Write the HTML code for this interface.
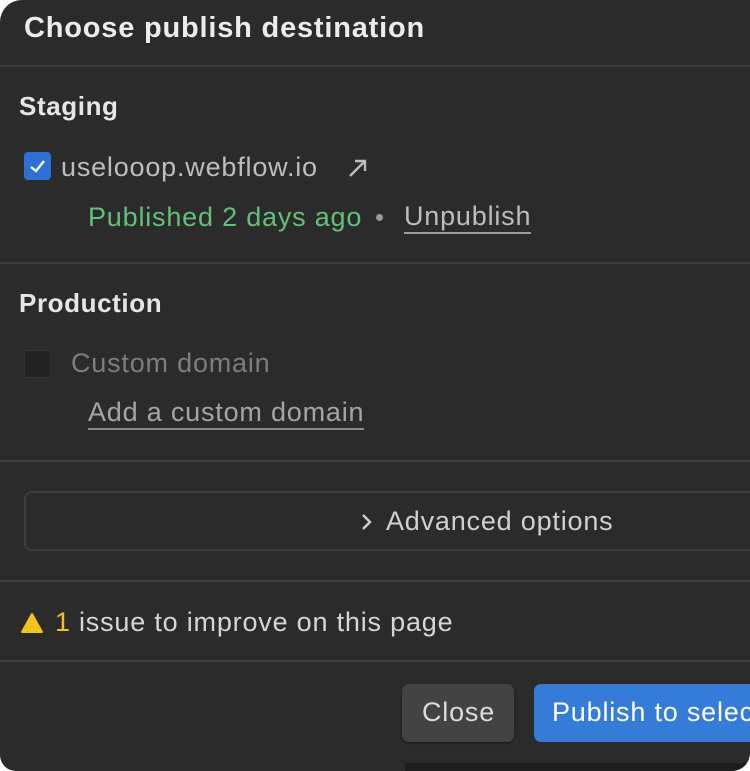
<!DOCTYPE html>
<html><head><style>
html,body{margin:0;padding:0;width:750px;height:771px;background:#fff;overflow:hidden;font-family:"Liberation Sans",Arial,sans-serif;}
.p{position:absolute;left:0;top:0;width:750px;height:771px;background:#2b2b2b;border-radius:22px 0 18px 16px;overflow:hidden;}
.hr{position:absolute;left:0;width:750px;height:2px;background:#3d3d3d;}
.t{position:absolute;white-space:nowrap;font-size:27px;letter-spacing:0.8px;line-height:32px;}
</style></head><body>
<div class="p">
<div class="t" style="left:24px;top:12px;font-size:29px;font-weight:bold;color:#ececec;">Choose publish destination</div>
<div class="hr" style="top:65px"></div>
<div class="t" style="left:19px;top:90px;font-size:26px;letter-spacing:0.6px;font-weight:bold;color:#e6e6e6;">Staging</div>
<div style="position:absolute;left:24px;top:152px;width:27px;height:28px;background:#2f6fd6;border-radius:4px;"></div>
<svg style="position:absolute;left:24px;top:152px" width="27" height="28"><path d="M7 15 L12 19 L20 9" stroke="#fff" stroke-width="2.4" fill="none"/></svg>
<div class="t" style="left:61px;top:151px;color:#bdbdbd;">uselooop.webflow.io</div>
<svg style="position:absolute;left:347px;top:157px" width="22" height="22"><path d="M3 19 L18 4 M8 4 H18 V14" stroke="#bdbdbd" stroke-width="2.4" fill="none"/></svg>
<div class="t" style="left:88px;top:201px;color:#62c07a;">Published 2 days ago</div>
<div style="position:absolute;left:376px;top:214px;width:7px;height:7px;border-radius:50%;background:#9a9a9a;"></div>
<div class="t" style="left:404px;top:200px;color:#bdbdbd;border-bottom:2px solid #9a9a9a;">Unpublish</div>
<div class="hr" style="top:262px"></div>
<div class="t" style="left:19px;top:287px;font-size:26px;letter-spacing:0.6px;font-weight:bold;color:#e6e6e6;">Production</div>
<div style="position:absolute;left:24px;top:350px;width:25px;height:26px;background:#222;border:1px solid #333;border-radius:4px;"></div>
<div class="t" style="left:71px;top:347px;color:#7d7d7d;">Custom domain</div>
<div class="t" style="left:88px;top:396px;color:#a5a5a5;border-bottom:2px solid #8a8a8a;">Add a custom domain</div>
<div class="hr" style="top:460px"></div>
<div style="position:absolute;left:24px;top:491px;width:760px;height:56px;border:2px solid #3e3e3e;border-radius:8px;"></div>
<svg style="position:absolute;left:360px;top:512px" width="14" height="20"><path d="M3 3 L10 10 L3 17" stroke="#d0d0d0" stroke-width="2.4" fill="none"/></svg>
<div class="t" style="left:386px;top:505px;color:#d0d0d0;">Advanced options</div>
<div class="hr" style="top:580px"></div>
<svg style="position:absolute;left:20px;top:612px" width="24" height="21"><path d="M12 2 L22 20 H2 Z" fill="#f4c21b" stroke="#f4c21b" stroke-width="2" stroke-linejoin="round"/></svg>
<div class="t" style="left:55px;top:606px;color:#f4c21b;">1</div>
<div class="t" style="left:79px;top:606px;color:#d6d6d6;">issue to improve on this page</div>
<div class="hr" style="top:660px"></div>
<div style="position:absolute;left:402px;top:684px;width:112px;height:58px;background:#434343;border-radius:7px;box-shadow:0 1px 2px #1a1a1a;"></div>
<div class="t" style="left:422px;top:696px;color:#dcdcdc;">Close</div>
<div style="position:absolute;left:534px;top:684px;width:260px;height:58px;background:#347cd7;border-radius:7px;"></div>
<div class="t" style="left:552px;top:696px;color:#fff;">Publish to selec</div>
<div style="position:absolute;left:405px;top:763px;width:345px;height:8px;background:#1e1e1e;"></div>
</div>
</body></html>
